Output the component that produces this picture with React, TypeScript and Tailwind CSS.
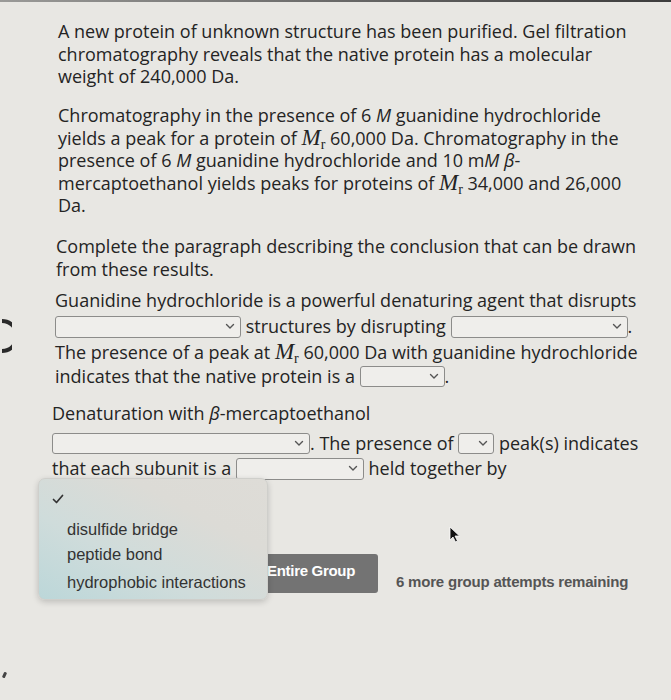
import React from "react";

const Mr = () => (
  <span className="inline-block h-[18px] leading-[18px]">
    <span className="font-['Liberation_Serif',serif] italic text-[23px] leading-[18px]">M</span>
    <span className="font-['Liberation_Serif',serif] text-[14px] leading-[10px] relative top-[4px]">r</span>
  </span>
);

const Chevron = () => (
  <svg width="10" height="7" viewBox="0 0 10 7" className="shrink-0">
    <polyline points="1.5,1.5 5,5 8.5,1.5" fill="none" stroke="#555" strokeWidth="1.4" strokeLinecap="round" strokeLinejoin="round" />
  </svg>
);

const Box = ({ w, h = 21 }: { w: number; h?: number }) => (
  <span
    className="inline-flex align-middle -mt-[3px] items-center justify-end pr-[5px] border border-[#8c8c8a] rounded-[3px] bg-[#efeeeb]"
    style={{ width: w, height: h }}
  >
    <Chevron />
  </span>
);

const Line = ({ children, h = "h-[22.5px] leading-[22.5px]", cls = "" }: { children: React.ReactNode; h?: string; cls?: string }) => (
  <div className={`whitespace-pre ${h} ${cls}`}>{children}</div>
);

export default function App() {
  return (
    <div className="relative w-[671px] h-[700px] overflow-hidden bg-[#e8e7e3] text-[#242424] font-['Open_Sans',sans-serif] text-[18px]">
      <div className="absolute left-0 right-0 top-0 h-[2px] bg-gradient-to-r from-[#9a9a98] to-[#3c3c3c]" />
      <div className="pl-[58px] pt-[20px]">
        {/* para 1 */}
        <Line>A new protein of unknown structure has been purified. Gel filtration</Line>
        <Line>chromatography reveals that the native protein has a molecular</Line>
        <Line>weight of 240,000 Da.</Line>

        {/* para 2 */}
        <div className="mt-[16.5px]">
          <Line>Chromatography in the presence of 6 <i>M</i> guanidine hydrochloride</Line>
          <Line>yields a peak for a protein of <Mr /> 60,000 Da. Chromatography in the</Line>
          <Line>presence of 6 <i>M</i> guanidine hydrochloride and 10 m<i>M</i>{" "}<i>β</i>-</Line>
          <Line>mercaptoethanol yields peaks for proteins of <Mr /> 34,000 and 26,000</Line>
          <Line>Da.</Line>
        </div>

        {/* para 3 */}
        <div className="mt-[18.5px] -ml-[2px]">
          <Line>Complete the paragraph describing the conclusion that can be drawn</Line>
          <Line>from these results.</Line>
        </div>

        {/* guanidine block */}
        <div className="mt-[9px] -ml-[3px]">
          <Line>Guanidine hydrochloride is a powerful denaturing agent that disrupts</Line>
          <Line h="h-[26px] leading-[26px]" cls="mt-[1.5px]">
            <Box w={186} h={22} />
            {" structures by disrupting "}
            <Box w={177} h={22} />
            {"."}
          </Line>
          <Line cls="mt-[2px]">The presence of a peak at <Mr /> 60,000 Da with guanidine hydrochloride</Line>
          <Line h="h-[24px] leading-[24px]" cls="mt-[0.5px]">
            {"indicates that the native protein is a "}
            <Box w={85} h={21} />
            {"."}
          </Line>
        </div>

        {/* denaturation block */}
        <div className="mt-[14px] -ml-[6px]">
          <Line>Denaturation with <i>β</i>-mercaptoethanol</Line>
          <Line h="h-[26px] leading-[26px]" cls="mt-[5.5px]">
            <Box w={258} h={21} />
            {". The presence of "}
            <Box w={36} h={21} />
            {" peak(s) indicates"}
          </Line>
          <Line h="h-[26px] leading-[26px]" cls="-mt-[1px]">
            {"that each subunit is a "}
            <Box w={128} h={22} />
            {" held together by"}
          </Line>
        </div>

        {/* bottom row */}
        <div className="mt-[72px] flex items-center -ml-[58px]">
          <div className="ml-[262px] w-[116px] h-[39px] bg-[#737373] rounded-[3px] flex items-center pl-[5px] text-white font-['Liberation_Sans',Arial,sans-serif] font-bold text-[15px] tracking-[-0.3px]">
            <span className="-mt-[4px]">Entire Group</span>
          </div>
          <div className="ml-[18px] mt-[18px] text-[#555] font-['Liberation_Sans',Arial,sans-serif] font-bold text-[15px] tracking-[-0.2px]">
            6 more group attempts remaining
          </div>
        </div>
      </div>

      {/* dropdown menu */}
      <div className="absolute left-[38px] top-[478px] w-[230px] h-[122px] rounded-[7px] border border-[#cfcfcb] shadow-[0_2px_6px_rgba(0,0,0,0.18)] bg-[linear-gradient(to_top_right,#bcd7d9_0%,#cfdcdb_35%,#dcdbd6_70%,#dedcd7_100%)] font-['Liberation_Sans',Arial,sans-serif] text-[16.5px] text-[#333]">
        <svg width="12" height="10" viewBox="0 0 12 10" className="absolute left-[13px] top-[15px]">
          <polyline points="1.5,5.5 4.5,8.5 10.5,1.5" fill="none" stroke="#333" strokeWidth="1.7" strokeLinecap="round" strokeLinejoin="round" />
        </svg>
        <div className="absolute left-[28px] top-[38px]">disulfide bridge</div>
        <div className="absolute left-[28px] top-[63px]">peptide bond</div>
        <div className="absolute left-[28px] top-[91px]">hydrophobic interactions</div>
      </div>

      {/* mouse cursor */}
      <svg width="12" height="17" viewBox="0 0 12 17" className="absolute left-[449px] top-[526px]">
        <path d="M1,1 L1,14 L4,11 L6.5,16 L8.5,15 L6,10 L10.5,10 Z" fill="#111" stroke="#fff" strokeWidth="0.8" />
      </svg>

      {/* left edge artefact */}
      <svg width="12" height="36" viewBox="0 0 12 36" className="absolute left-0 top-[318px]">
        <path d="M0,3 A14,14 0 0 1 0,33" fill="none" stroke="#2a2a2a" strokeWidth="4" transform="translate(2,0)" />
      </svg>

      {/* bottom-left speck */}
      <div className="absolute left-[3px] top-[672px] w-[3px] h-[6px] bg-[#444] rotate-[25deg] rounded-[1px]" />
    </div>
  );
}
